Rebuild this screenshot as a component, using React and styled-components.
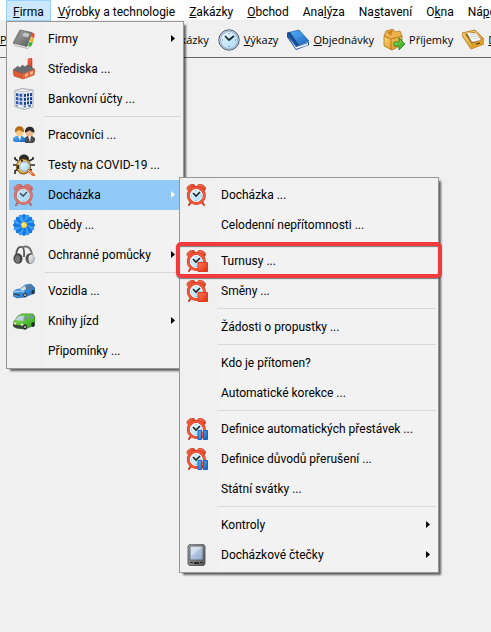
import React from "react"
import styled, { createGlobalStyle, css } from "styled-components"

const GlobalStyle = createGlobalStyle`
    * {
        box-sizing: border-box;
    }

    body {
        margin: 0;
        background: #f0f0f0;
        color: #000;
        font-family: Roboto, "Open Sans", sans-serif;
        font-size: 12px;
        line-height: 16px;
        overflow: hidden;
    }

    button {
        margin: 0;
        border: 0;
        background: none;
        color: inherit;
        font: inherit;
        text-align: left;
        white-space: nowrap;
    }

    ul {
        margin: 0;
        padding: 0;
        list-style: none;
    }
`

const Window = styled.div`
    min-height: 100vh;
    background: #f0f0f0;
`

const MenuBar = styled.ul`
    position: relative;
    z-index: 1;
    display: flex;
    height: 20px;
    padding-left: 6px;
    background: #fff;
`

const BarItem = styled.li`
    position: relative;
`

const BarButton = styled.button`
    height: 21px;
    padding: 3px 7px 0;
    ${({ $open }) => $open && css`
        background: #cce8ff;
        box-shadow: inset 0 0 0 1px #99d1ff;
    `}
`

const ToolBar = styled.div`
    display: flex;
    align-items: center;
    gap: 9px;
    height: 38px;
    overflow: hidden;
    border-bottom: 1px solid #696969;
    font-family: "Open Sans", sans-serif;
    font-size: 11px;
`

const ToolButton = styled.button`
    display: flex;
    flex: none;
    align-items: center;
    gap: 4px;
    padding: 2px 0 0;
    ${({ $width }) => $width && css`width: ${$width}px;`}
`

const Popup = styled.ul`
    position: absolute;
    top: ${({ $nested }) => ($nested ? "-3px" : "21px")};
    left: ${({ $nested }) => ($nested ? "calc(100% - 2px)" : "0")};
    z-index: 2;
    width: ${({ $width }) => $width}px;
    padding: 2px;
    border: 1px solid #979797;
    background: linear-gradient(90deg, #f0f0f0 38px, #f2f2f2 38px);
    box-shadow: 3px 3px 2px -1px rgba(0, 0, 0, 0.6);
`

const Row = styled.li`
    position: relative;
`

const RowButton = styled.button`
    display: grid;
    grid-template-columns: 22px minmax(0, 1fr) 5px;
    column-gap: 13px;
    align-items: center;
    width: 100%;
    height: 30px;
    padding: 0 5px 0 4px;
    background: ${({ $active }) => ($active ? "#91c9f7" : "none")};

    svg {
        opacity: ${({ $active }) => ($active ? 0.7 : 1)};
    }

    svg:last-child {
        opacity: 1;
    }
`

const Separator = styled.li`
    height: 6px;
    padding: 2px 0 0 36px;

    &::after {
        content: "";
        display: block;
        height: 1px;
        background: #d7d7d7;
    }
`

const Highlight = styled.span`
    position: absolute;
    inset: -4px -6px -2px;
    z-index: 3;
    border: 4px solid #f03a3e;
    border-radius: 5px;
    box-shadow: 0 1px 1px rgba(0, 0, 0, 0.5), inset 0 1px 1px rgba(0, 0, 0, 0.5);
    pointer-events: none;
`

const Gradient = ({ id, from, to }) => (
    <linearGradient id={id} x1="0" y1="0" x2="1" y2="1">
        <stop offset="0" stopColor={from} />
        <stop offset="1" stopColor={to} />
    </linearGradient>
)

// gradients shared by all the icons
const Gradients = () => (
    <svg width="0" height="0" style={{ position: "absolute" }} aria-hidden="true">
        <defs>
            <Gradient id="grey" from="#b4b4b4" to="#555" />
            <Gradient id="silver" from="#fff" to="#9da3ab" />
            <Gradient id="red" from="#ff7a58" to="#d62b12" />
            <Gradient id="brick" from="#f08a64" to="#cf4424" />
            <Gradient id="blue" from="#62b4f5" to="#1263bd" />
            <Gradient id="sky" from="#f4fcff" to="#9dd8f6" />
            <Gradient id="gold" from="#ffd870" to="#d08a18" />
            <Gradient id="green" from="#8ee65e" to="#2b9c1c" />
            <Gradient id="screen" from="#d5e2f3" to="#8ba6ca" />
        </defs>
    </svg>
)

const Icon = ({ children }) => (
    <svg width="22" height="22" viewBox="0 0 22 22" aria-hidden="true">{children}</svg>
)

const BinderIcon = () => (
    <Icon>
        <path d="M1 15.500l1 2 13 3 3-3 3-12-3-1z" fill="#f4f4f4" stroke="#888" strokeWidth=".6" />
        <path d="M7 2l12 2.500-5 14L0 15z" fill="url(#grey)" stroke="#666" strokeWidth=".8" />
        <path d="M7 2l2 .4L3 16l-3-1z" fill="#858585" />
        <path d="M11 5l5 1-1 3-5-1z" fill="#c5c5c5" stroke="#ddd" strokeWidth=".4" />
        <path d="M18.500 5l3 .7-.3 4-3-.5z" fill="#e8452c" />
        <path d="M17.700 9.500l3.300.6-.7 4-3.300-.6z" fill="#f4b21f" />
        <path d="M16.500 14l3.500.6-2 4-3-.6z" fill="#3fb432" />
    </Icon>
)

const FactoryIcon = () => (
    <Icon>
        <path d="M15 1l3-1 1 1v10h-4z" fill="url(#red)" stroke="#a5341a" strokeWidth=".5" />
        <path d="M0 12l5-4 1 2 4-3 1 2 4-2 6 4-11 5z" fill="#6a6b6c" stroke="#4d4d4d" strokeWidth=".5" />
        <path d="M0 12l10 4v5L1 18z" fill="#dc5b35" />
        <path d="M10 16l12-5-1 6-11 4z" fill="url(#brick)" />
        <path d="M0 12l10 4 12-5-1 6-11 4-9-3z" fill="none" stroke="#c34a2a" strokeWidth=".6" />
        <path d="M12 16l3-1v3l-3 1zm5-2l3-1v3l-3 1z" fill="#ffb48b" />
    </Icon>
)

const BuildingIcon = () => (
    <Icon>
        <path d="M2 2.500l7-2 11 1.500v17l-9 2.500-9-3z" fill="#eceff2" stroke="#969ca4" strokeWidth=".8" />
        <path d="M2 2.500l8 1.500 10-2M10 4v17" fill="none" stroke="#b3b8be" strokeWidth=".8" />
        {[5, 9, 13].map((y) => (
            <g key={y}>
                <path d={`M3 ${y}l2.500.4v3L3 ${y + 3}zm3.500 .6l2.700.4v3l-2.700-.4z`} fill="#2d58aa" />
                <path d={`M11 ${y + 1}l2-.3v3l-2 .3zm3-.4l2-.3v3l-2 .3zm3-.4l2-.3v3l-2 .3z`} fill="#173f96" />
            </g>
        ))}
        <path d="M3 17l2 .5v1L3 18zm8 .5l2-.3v2l-2 .3zm4-.5l3-.5v2l-3 .4z" fill="#5478ba" />
    </Icon>
)

const PeopleIcon = () => (
    <Icon>
        <path d="M12 19v-5l2-2h5l3 2v3l-2 2z" fill="#4c4c4e" />
        <path d="M15 12h3l-1 6z" fill="#f0f0f0" />
        <circle cx="16.500" cy="8.500" r="4" fill="#ebb889" />
        <path d="M12 8.500c-1-7 10-8 9.500 0-3 0-4-2-5-2s-2 2-4.500 2z" fill="#302d2b" />
        <path d="M0 17v-3l3-2h6l3 2v4H2z" fill="url(#blue)" />
        <path d="M5 12h3l-1 5z" fill="#e6f1fb" />
        <circle cx="6.500" cy="8" r="4.200" fill="#f8ca84" />
        <path d="M2 8c-1-7 9.500-8 9 0-3 0-4-2-5-2S4 8 2 8z" fill="#b96d18" />
    </Icon>
)

const BugIcon = () => (
    <Icon>
        <path d="M5 7L2 5V3M4 11H0M5 15l-3 2v3M16 7l4-2V3M17 11h5M16 15l3 1" fill="none" stroke="#262626" strokeWidth="1.600" />
        <path d="M6 5c0-6 10-6 10 0l-1 3H7z" fill="#292929" />
        <ellipse cx="10.500" cy="12.500" rx="7" ry="7.500" fill="url(#gold)" stroke="#6e4d0b" />
        <path d="M5 11v4M9 6v3" stroke="#3e3013" strokeWidth="2" />
        <circle cx="11.500" cy="12.500" r="4.800" fill="url(#sky)" stroke="#a7b7c5" strokeWidth="1.400" />
        <path d="M15.500 16.500l5 4.500" stroke="#e46b32" strokeWidth="3" strokeLinecap="round" />
        <path d="M15 16l4 4" stroke="#ffd0a1" />
    </Icon>
)

const AlarmIcon = ({ badge }) => (
    <Icon>
        <path d="M5 18l-2 3M16 18l2 3" stroke="#c93a24" strokeWidth="2" strokeLinecap="round" />
        <ellipse cx="5" cy="3.500" rx="4.400" ry="2.800" transform="rotate(-28 5 3.500)" fill="url(#red)" stroke="#b8331d" strokeWidth=".5" />
        <ellipse cx="15.500" cy="3.500" rx="4.400" ry="2.800" transform="rotate(28 15.500 3.500)" fill="url(#red)" stroke="#b8331d" strokeWidth=".5" />
        <circle cx="10.300" cy="11.500" r="8" fill="url(#sky)" stroke="#c3301b" strokeWidth="3" />
        <circle cx="10.300" cy="11.500" r="8" fill="none" stroke="#f4593b" strokeWidth="2.200" />
        <circle cx="10.300" cy="11.500" r="6" fill="none" stroke="#fff" strokeWidth=".8" />
        <path d="M10 6v1m0 9v1M5 12h1m9 0h1" stroke="#79a9bc" />
        <path d="M7 9l3 3 4-4" fill="none" stroke="#222" strokeWidth="1.600" />
        {badge === "stop" && (
            <path d="M12 12.500h9.500v9H12z" fill="url(#red)" stroke="#e03c20" />
        )}
        {badge === "pause" && (
            <path d="M12 12.500h3.500v9H12zm5.500 0h4v9h-4z" fill="url(#blue)" stroke="#1c62c4" />
        )}
    </Icon>
)

const FlowerIcon = () => (
    <Icon>
        <circle cx="11" cy="11" r="10" fill="#1b80eb" />
        {[...Array(16)].map((_, i) => (
            <ellipse key={i} cx="11" cy="4.500" rx="1.900" ry="4.400" fill={i % 2 ? "#3ba2ff" : "#1679e4"}
                stroke="#1268c9" strokeWidth=".3" transform={`rotate(${i * 22.5} 11 11)`} />
        ))}
        <circle cx="11" cy="11" r="3" fill="#ffd43c" />
        <circle cx="10.500" cy="10.500" r="1.200" fill="#fff6ae" />
    </Icon>
)

const HeadphonesIcon = () => (
    <Icon>
        <path d="M3 13C3 5 6 2 9 3s2 7 2 10" fill="none" stroke="#555" strokeWidth="1.800" />
        <path d="M10 3c6-2 9 3 9 9" fill="none" stroke="#777" strokeWidth="2" />
        <ellipse cx="5" cy="14.500" rx="4.500" ry="5.300" fill="#444" />
        <ellipse cx="4.500" cy="15" rx="2.600" ry="3.800" fill="#777" />
        <ellipse cx="17" cy="14.500" rx="4.500" ry="5.300" fill="#555" />
        <ellipse cx="18.500" cy="15" rx="3" ry="4.600" fill="url(#silver)" />
    </Icon>
)

const CarIcon = () => (
    <Icon>
        <path d="M0 13c1-3 4-4 7-4l5-4 6-1 4 4v5l-5 2-5 2-8 1-4-2z" fill="url(#blue)" stroke="#2767a9" strokeWidth=".6" />
        <path d="M7 9l5-3 1 3-3 2z" fill="#cee6f8" />
        <path d="M13 6l5-1 2 3-7 2z" fill="#587591" />
        <path d="M1 12l7-1 4 2" fill="none" stroke="#a5d5fa" />
        <path d="M1 14l6 1" stroke="#31465b" strokeWidth="1.500" />
        <ellipse cx="12" cy="15" rx="1.800" ry="2.400" fill="#303438" />
        <ellipse cx="20" cy="12" rx="1.500" ry="2.300" fill="#303438" />
        <circle cx="12" cy="15" r="1" fill="#c1c7cc" />
    </Icon>
)

const VanIcon = () => (
    <Icon>
        <path d="M0 13l5-7 4-2 11 0 2 3v8l-5 2-5 2-9-1-3-2z" fill="url(#green)" stroke="#287c1d" strokeWidth=".7" />
        <path d="M2 10l4-4 5 0-1 5z" fill="#bcd1df" />
        <path d="M12 6l3-.5v4l-4 1zm4-.5h2v3l-2 .6zm3 0h1l1 2-2 .8z" fill="#73959f" />
        <path d="M0 14l10 2v3l-7-1-3-2z" fill="#3e443d" />
        <path d="M1 13l2 1m5 0l2 1" stroke="#f4f5c5" strokeWidth="1.600" />
        <ellipse cx="12" cy="17" rx="2" ry="2.700" fill="#272a2c" />
        <ellipse cx="20" cy="14.500" rx="1.700" ry="2.500" fill="#272a2c" />
        <circle cx="12" cy="17" r="1" fill="#ccd1d5" />
    </Icon>
)

const TerminalIcon = () => (
    <Icon>
        <path d="M2 2l2-2h13l2 2v18l-2 2H4l-2-2z" fill="url(#grey)" stroke="#444" strokeWidth=".8" />
        <path d="M4 2h13v14H4z" fill="url(#screen)" stroke="#55585c" strokeWidth=".8" />
        <path d="M5 3h11L5 12z" fill="#fff" opacity=".35" />
        <path d="M4 18h3v1H4zm4 0h5v2H8zm6 0h3v1h-3z" fill="#27292b" />
    </Icon>
)

const ClockIcon = () => (
    <Icon>
        <circle cx="11" cy="11" r="10.200" fill="url(#sky)" stroke="#44546b" />
        <circle cx="11" cy="11" r="8.800" fill="none" stroke="#a9b9d0" strokeWidth="1.600" />
        <path d="M11 4v1m0 12v1M4 11h1m12 0h1" stroke="#668" />
        <path d="M7 7l4 4 5-4" fill="none" stroke="#20252d" strokeWidth="1.700" />
    </Icon>
)

const BookIcon = () => (
    <Icon>
        <path d="M0 4l9 13 13-4v3l-13 5L0 8z" fill="#11539e" />
        <path d="M1 7l8 11 12-4v2l-12 4z" fill="#eee" />
        <path d="M0 4l12-3 10 11-13 5z" fill="url(#blue)" stroke="#1657a7" strokeWidth=".7" />
        <path d="M0 4l3-1 9 13-3 1z" fill="#174b91" />
        <path d="M7 5l6-2 3 3-6 2z" fill="#3c99e8" />
    </Icon>
)

const BoxIcon = () => (
    <Icon>
        <path d="M1 7l7 3 11-3v9L9 21l-8-4z" fill="url(#gold)" stroke="#a96b12" strokeWidth=".7" />
        <path d="M1 7l2-5 7-2 2 3 5-1 2 5-11 3z" fill="#eeb44c" stroke="#a96b12" strokeWidth=".7" />
        <path d="M8 10v11" stroke="#b87818" />
        <path d="M4 3l6-2-2 6" fill="#c88422" />
        <path d="M11 13h5v-4l6 6-6 6v-4h-5z" fill="url(#green)" stroke="#247f19" strokeWidth=".8" />
    </Icon>
)

const TrayIcon = () => (
    <Icon>
        <path d="M0 4l13-3 9 9v5l-13 5L1 8z" fill="url(#gold)" stroke="#aa7117" strokeWidth=".8" />
        <path d="M3 5l9-2 8 8-10 4z" fill="#8f641c" />
        <path d="M5 4l9 0 5 7-9 2z" fill="#fff" stroke="#b7b7b7" strokeWidth=".5" />
        <path d="M8 6l6-1M9 8l6-1M11 10l5-1" stroke="#a7a7a7" strokeWidth=".6" />
        <path d="M9 15l13-5v5l-13 5z" fill="#dca02c" />
        <path d="M14 15l4-1" stroke="#775013" strokeWidth="1.300" />
    </Icon>
)

const Arrow = ({ color }) => (
    <svg width="5" height="8" viewBox="0 0 5 8" aria-hidden="true">
        <path d="M0 0l4 3.500L0 7z" fill={color} />
    </svg>
)

// "&" stands before the access key
const Label = ({ text }) => {
    const [before, after] = text.split("&")
    if (after === undefined) return <span>{text}</span>
    return <span>{before}<u>{after[0]}</u>{after.slice(1)}</span>
}

const attendanceMenu = [
    { text: "Docházka ...", icon: <AlarmIcon /> },
    { text: "Celodenní nepřítomnosti ..." },
    null,
    { text: "Turnusy ...", icon: <AlarmIcon badge="stop" />, highlighted: true },
    { text: "Směny ...", icon: <AlarmIcon badge="stop" /> },
    null,
    { text: "Žádosti o propustky ..." },
    null,
    { text: "Kdo je přítomen?" },
    { text: "Automatické korekce ..." },
    null,
    { text: "Definice automatických přestávek ...", icon: <AlarmIcon badge="pause" /> },
    { text: "Definice důvodů přerušení ...", icon: <AlarmIcon badge="pause" /> },
    { text: "Státní svátky ..." },
    null,
    { text: "Kontroly", arrow: true },
    { text: "Docházkové čtečky", icon: <TerminalIcon />, arrow: true },
]

const companyMenu = [
    { text: "Firmy", icon: <BinderIcon />, arrow: true },
    { text: "Střediska ...", icon: <FactoryIcon /> },
    { text: "Bankovní účty ...", icon: <BuildingIcon /> },
    null,
    { text: "Pracovníci ...", icon: <PeopleIcon /> },
    { text: "Testy na COVID-19 ...", icon: <BugIcon /> },
    { text: "Docházka", icon: <AlarmIcon />, arrow: true, submenu: attendanceMenu },
    { text: "Obědy ...", icon: <FlowerIcon /> },
    { text: "Ochranné pomůcky", icon: <HeadphonesIcon />, arrow: true },
    null,
    { text: "Vozidla ...", icon: <CarIcon /> },
    { text: "Knihy jízd", icon: <VanIcon />, arrow: true },
    { text: "Připomínky ..." },
]

const Menu = ({ items, width, nested }) => (
    <Popup role="menu" $width={width} $nested={nested}>
        {items.map((item, i) => item ? (
            <Row key={item.text} role="none">
                <RowButton role="menuitem" $active={!!item.submenu}>
                    {item.icon || <span />}
                    <span>{item.text}</span>
                    {item.arrow ? <Arrow color={item.submenu ? "#fff" : "#000"} /> : <span />}
                </RowButton>
                {item.submenu && <Menu items={item.submenu} width={260} nested />}
                {item.highlighted && <Highlight />}
            </Row>
        ) : <Separator key={i} role="separator" />)}
    </Popup>
)

const barItems = ["&Výrobky a technologie", "&Zakázky", "&Obchod", "Ana&lýza", "Na&stavení", "O&kna", "Ná&pověda"]

const App = () => (
    <Window>
        <GlobalStyle />
        <Gradients />
        <MenuBar role="menubar">
            <BarItem role="none">
                <BarButton role="menuitem" $open><Label text="&Firma" /></BarButton>
                <Menu items={companyMenu} width={178} />
            </BarItem>
            {barItems.map((text) => (
                <BarItem key={text} role="none">
                    <BarButton role="menuitem"><Label text={text} /></BarButton>
                </BarItem>
            ))}
        </MenuBar>
        <ToolBar role="toolbar">
            <ToolButton $width={133}><Label text="&Poptávky" /></ToolButton>
            <ToolButton><BinderIcon /><Label text="&Zakázky" /></ToolButton>
            <ToolButton><ClockIcon /><Label text="&Výkazy" /></ToolButton>
            <ToolButton><BookIcon /><Label text="&Objednávky" /></ToolButton>
            <ToolButton><BoxIcon /><Label text="Pří&jemky" /></ToolButton>
            <ToolButton><TrayIcon /><Label text="&Dodací listy" /></ToolButton>
        </ToolBar>
    </Window>
)

export default App
